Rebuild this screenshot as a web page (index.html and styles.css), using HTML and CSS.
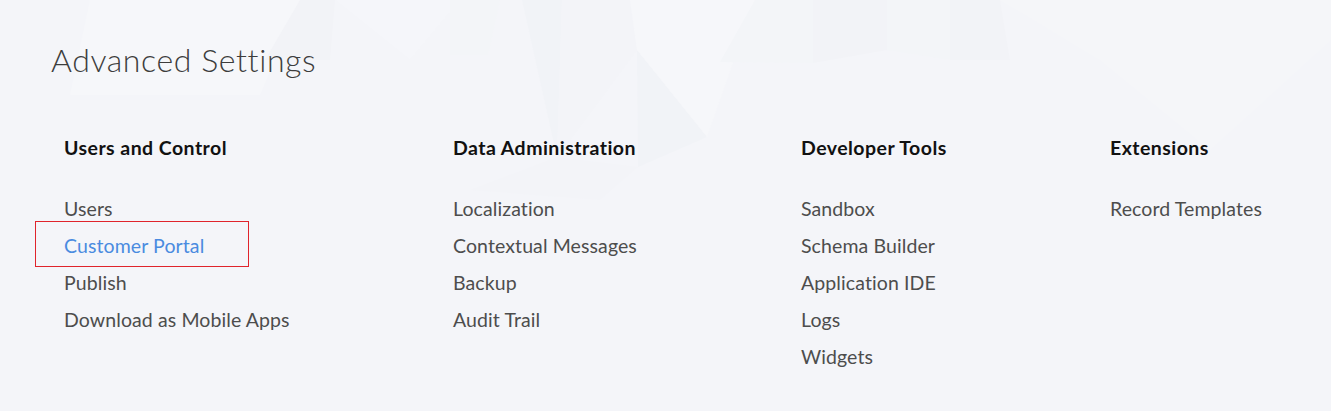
FILE: index.html
```html
<!DOCTYPE html>
<html lang="en">
<head>
<meta charset="utf-8">
<title>Advanced Settings</title>
<link rel="stylesheet" href="styles.css">
</head>
<body>
<div class="page">
  <svg class="bg" width="1331" height="411" viewBox="0 0 1331 411" aria-hidden="true">
    <polygon points="90,0 300,0 260,95 70,95" fill="#f6f7fa"/>
    <polygon points="300,0 335,0 330,60 265,60" fill="#f2f3f7"/>
    <polygon points="335,0 460,0 410,60" fill="#f5f6fa"/>
    <polygon points="450,0 500,0 488,55 450,55" fill="#f3f5f8"/>
    <polygon points="522,0 562,0 557,157" fill="#f1f3f7"/>
    <polygon points="562,0 630,0 637,50 557,157" fill="#f3f4f8"/>
    <polygon points="637,50 707,137 638,167" fill="#f1f3f7"/>
    <polygon points="630,0 755,0 707,137 637,50" fill="#f6f7fa"/>
    <polygon points="755,0 813,0 813,63 720,62" fill="#f3f5f8"/>
    <polygon points="813,0 887,0 887,50 813,63" fill="#f2f3f7"/>
    <polygon points="887,0 950,0 950,60 887,50" fill="#f3f5f8"/>
    <polygon points="950,0 1000,0 1010,60 950,60" fill="#f2f3f7"/>
    <polygon points="1000,0 1331,0 1331,40 1210,150 1100,60" fill="#f5f6f9"/>
    <polygon points="557,157 638,167 600,200 470,190" fill="#f3f4f8"/>
  </svg>
  <main class="content">
    <h1 class="title">Advanced Settings</h1>
    <div class="columns">
      <section class="group">
        <h2 class="group-title">Users and Control</h2>
        <ul class="links">
          <li>Users</li>
          <li class="active">Customer Portal</li>
          <li>Publish</li>
          <li>Download as Mobile Apps</li>
        </ul>
      </section>
      <section class="group">
        <h2 class="group-title">Data Administration</h2>
        <ul class="links">
          <li>Localization</li>
          <li>Contextual Messages</li>
          <li>Backup</li>
          <li>Audit Trail</li>
        </ul>
      </section>
      <section class="group">
        <h2 class="group-title">Developer Tools</h2>
        <ul class="links">
          <li>Sandbox</li>
          <li>Schema Builder</li>
          <li>Application IDE</li>
          <li>Logs</li>
          <li>Widgets</li>
        </ul>
      </section>
      <section class="group">
        <h2 class="group-title">Extensions</h2>
        <ul class="links">
          <li>Record Templates</li>
        </ul>
      </section>
    </div>
  </main>
</div>
</body>
</html>
```

FILE: styles.css
```css
html, body {
  margin: 0;
  padding: 0;
}
body {
  background: #f4f5f9;
  font-family: "Lato", "Open Sans", "Liberation Sans", sans-serif;
  color: #3f3f3f;
}
.page {
  position: relative;
  width: 1331px;
  height: 411px;
  overflow: hidden;
}
.bg {
  position: absolute;
  left: 0;
  top: 0;
  z-index: 0;
}
.content {
  position: relative;
  z-index: 1;
  padding: 40px 0 0 51px;
}
.title {
  margin: 0;
  font-size: 32px;
  font-weight: 300;
  line-height: 40px;
  color: #3d3d3d;
  letter-spacing: 0.6px;
}
.columns {
  display: grid;
  grid-template-columns: 389px 348px 309px auto;
  margin: 56px 0 0 13px;
}
.group-title {
  margin: 0;
  font-size: 19.5px;
  font-weight: 700;
  line-height: 24px;
  letter-spacing: 0.45px;
  color: #111;
}
.links {
  list-style: none;
  margin: 30px 0 0 0;
  padding: 0;
}
.links li {
  position: relative;
  font-size: 19.5px;
  line-height: 37px;
  letter-spacing: 0.1px;
  color: #4d4d4d;
  white-space: nowrap;
}
.links li.active {
  color: #4a8be0;
}
.links li.active::after {
  content: "";
  position: absolute;
  left: -29px;
  top: -6px;
  width: 212px;
  height: 44px;
  border: 1px solid #e0242c;
  pointer-events: none;
}
```
